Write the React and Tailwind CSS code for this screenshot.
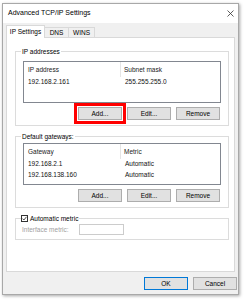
import React from 'react';

const font = "font-['Liberation_Sans',Arial,sans-serif]";

function Btn({ children, primary, marked }) {
  return (
    <button
      className={
        'h-[13px] w-[44px] flex items-center justify-center text-[6.5px] text-black bg-[#e1e1e1] border ' +
        (primary ? 'border-[#0078d7] ' : 'border-[#adadad] ') +
        (marked ? 'outline-[3px] outline-solid outline-[#ff0000] outline-offset-[1px]' : '')
      }
    >
      {children}
    </button>
  );
}

function ListBox({ cols, rows, h }) {
  return (
    <div className={'border border-[#828790] bg-white ' + h}>
      <div className="flex h-[15px] items-center text-[6.5px] text-[#222]">
        <div className="w-[97px] h-full flex items-center pl-[4px] border-r border-[#e5e5e5]">{cols[0]}</div>
        <div className="flex-1 h-full flex items-center pl-[3px]">{cols[1]}</div>
      </div>
      {rows.map((r, i) => (
        <div key={i} className="flex h-[10.5px] items-center text-[6.5px] text-[#111]">
          <div className="w-[97px] pl-[4px]">{r[0]}</div>
          <div className="flex-1 pl-[4px]">{r[1]}</div>
        </div>
      ))}
    </div>
  );
}

function Group({ legend, children, className }) {
  return (
    <fieldset className={'border border-[#dcdcdc] px-[7px] ' + className}>
      <legend className="-ml-[2px] px-[1px] text-[6.5px] leading-[9px] text-black">{legend}</legend>
      {children}
    </fieldset>
  );
}

export default function App() {
  return (
    <div className={'w-[245px] h-[300px] bg-white pt-[3px] pl-[2px] ' + font}>
      <div className="w-[237px] h-[292px] flex flex-col border border-[#a8a8a8] shadow-[1px_1px_3px_rgba(0,0,0,0.35)]">
        {/* title bar */}
        <div className="h-[19px] bg-white flex items-center justify-between pl-[5px] pr-[4px]">
          <span className="text-[7px] text-black">Advanced TCP/IP Settings</span>
          <svg width="7" height="7" viewBox="0 0 7 7">
            <path d="M0.5 0.5 L6.5 6.5 M6.5 0.5 L0.5 6.5" stroke="#333" strokeWidth="0.8" />
          </svg>
        </div>

        <div className="flex-1 bg-[#f0f0f0] flex flex-col pl-[3px] pr-[3px] pt-[2px]">
          {/* tabs */}
          <div className="flex items-end h-[13px] -mb-px relative z-10 text-[6.5px] text-black">
            <div className="h-[13px] w-[39px] bg-white border border-b-0 border-[#d9d9d9] flex items-center justify-center">IP Settings</div>
            <div className="h-[11px] w-[24px] bg-[#f0f0f0] border border-l-0 border-[#d9d9d9] flex items-center justify-center">DNS</div>
            <div className="h-[11px] w-[26px] bg-[#f0f0f0] border border-l-0 border-[#d9d9d9] flex items-center justify-center">WINS</div>
          </div>

          {/* panel */}
          <div className="h-[235px] w-[229px] bg-white border border-[#d9d9d9] pl-[8px] pr-[5px] pt-[9px] flex flex-col">
            <Group legend="IP addresses" className="pb-[5px]">
              <div className="mt-[5px]">
                <ListBox h="h-[42px]" cols={['IP address', 'Subnet mask']} rows={[['192.168.2.161', '255.255.255.0']]} />
              </div>
              <div className="flex justify-end gap-[5px] mt-[4px] pr-[1px]">
                <Btn marked>Add...</Btn>
                <Btn>Edit...</Btn>
                <Btn>Remove</Btn>
              </div>
            </Group>

            <Group legend="Default gateways:" className="mt-[6px] pb-[5px]">
              <div className="mt-[2px]">
                <ListBox
                  h="h-[42px]"
                  cols={['Gateway', 'Metric']}
                  rows={[
                    ['192.168.2.1', 'Automatic'],
                    ['192.168.138.160', 'Automatic'],
                  ]}
                />
              </div>
              <div className="flex justify-end gap-[5px] mt-[4px] pr-[1px]">
                <Btn>Add...</Btn>
                <Btn>Edit...</Btn>
                <Btn>Remove</Btn>
              </div>
            </Group>

            <fieldset className="border border-[#dcdcdc] mt-[6px] px-[6px] pb-[4px]">
              <legend className="-ml-[1px] pr-[1px] flex items-center gap-[2px] text-[6.5px] leading-[9px] text-black">
                <span className="w-[7px] h-[7px] border border-[#333] bg-white flex items-center justify-center">
                  <svg width="5" height="5" viewBox="0 0 5 5">
                    <path d="M0.5 2.6 L1.9 4 L4.5 0.8" fill="none" stroke="#222" strokeWidth="0.8" />
                  </svg>
                </span>
                Automatic metric
              </legend>
              <div className="flex items-center gap-[10px] text-[6.5px] text-[#a0a0a0] mt-[1px]">
                <span>Interface metric:</span>
                <div className="w-[45px] h-[11px] border border-[#cccccc] bg-white" />
              </div>
            </fieldset>
          </div>

          {/* OK / Cancel */}
          <div className="flex justify-end gap-[5px] mt-[5px] -mr-[2px]">
            <Btn primary>OK</Btn>
            <Btn>Cancel</Btn>
          </div>
        </div>
      </div>
    </div>
  );
}
